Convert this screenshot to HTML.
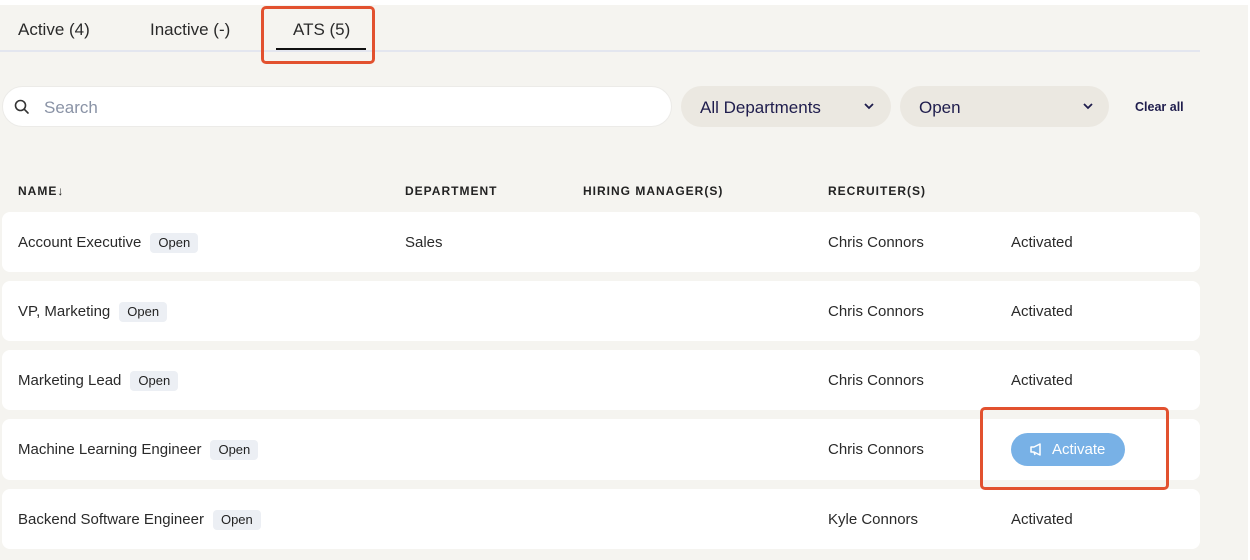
<!DOCTYPE html>
<html><head><style>
*{margin:0;padding:0;box-sizing:border-box}
body{width:1250px;height:560px;background:#fff;font-family:"Liberation Sans",sans-serif;position:relative;overflow:hidden;color:#222}
.bg{position:absolute;left:0;top:5px;width:1248px;height:555px;background:#f5f4f0}
.a{position:absolute}
.tab{font-size:17px;color:#2a2a2a;top:20px}
.row{position:absolute;left:2px;width:1198px;height:60px;background:#fff;border-radius:8px}
.row span{position:absolute;top:22px;font-size:15px;line-height:17px;color:#2a2a2a}
.row span.n{display:flex;align-items:center;top:20px;height:21px}
.badge{display:inline-block;background:#eceff4;border-radius:4px;font-size:13px;line-height:14px;padding:3px 8px;margin-left:9px;color:#222}
.hd{top:184px;font-size:12px;font-weight:bold;letter-spacing:1px;color:#222}
.sel{position:absolute;top:86px;height:41px;background:#ebe8e1;border-radius:21px;font-size:17px;color:#1f1d4d}
</style></head><body>
<div class="bg"></div>
<div class="a tab" style="left:18px">Active (4)</div>
<div class="a tab" style="left:150px">Inactive (-)</div>
<div class="a tab" style="left:293px">ATS (5)</div>
<div class="a" style="left:0;top:50px;width:1200px;height:2px;background:#e3e6ef"></div>
<div class="a" style="left:276px;top:48px;width:90px;height:2px;background:#111"></div>
<div class="a" style="left:261px;top:6px;width:114px;height:58px;border:3px solid #e2512f;border-radius:5px"></div>
<div class="a" style="left:2px;top:86px;width:670px;height:41px;background:#fff;border-radius:21px;border:1px solid #ecebe8"></div>
<svg class="a" style="left:14px;top:99px" width="16" height="16" viewBox="0 0 16 16"><circle cx="6.5" cy="6.5" r="5" fill="none" stroke="#333" stroke-width="1.6"/><path d="M10.2 10.2L14 14" stroke="#333" stroke-width="1.6" stroke-linecap="round"/></svg>
<div class="a" style="left:44px;top:98px;font-size:17px;color:#8a93a6">Search</div>
<div class="sel" style="left:681px;width:210px"><span class="a" style="left:19px;top:12px">All Departments</span><svg class="a" style="left:183px;top:16px" width="10" height="8"><path d="M1 2l4 4 4-4" fill="none" stroke="#1f1d4d" stroke-width="1.8"/></svg></div>
<div class="sel" style="left:900px;width:209px"><span class="a" style="left:19px;top:12px">Open</span><svg class="a" style="left:183px;top:16px" width="10" height="8"><path d="M1 2l4 4 4-4" fill="none" stroke="#1f1d4d" stroke-width="1.8"/></svg></div>
<div class="a" style="left:1135px;top:100px;font-size:12.5px;font-weight:bold;color:#1f1d4d">Clear all</div>
<div class="a hd" style="left:18px">NAME↓</div>
<div class="a hd" style="left:405px">DEPARTMENT</div>
<div class="a hd" style="left:583px">HIRING MANAGER(S)</div>
<div class="a hd" style="left:828px">RECRUITER(S)</div>
<div class="row" style="top:212px"><span class="n" style="left:16px">Account Executive<b class="badge" style="font-weight:normal">Open</b></span><span style="left:403px">Sales</span><span style="left:826px">Chris Connors</span><span style="left:1009px">Activated</span></div>
<div class="row" style="top:281px"><span class="n" style="left:16px">VP, Marketing<b class="badge" style="font-weight:normal">Open</b></span><span style="left:826px">Chris Connors</span><span style="left:1009px">Activated</span></div>
<div class="row" style="top:350px"><span class="n" style="left:16px">Marketing Lead<b class="badge" style="font-weight:normal">Open</b></span><span style="left:826px">Chris Connors</span><span style="left:1009px">Activated</span></div>
<div class="row" style="top:419px;height:61px"><span class="n" style="left:16px">Machine Learning Engineer<b class="badge" style="font-weight:normal">Open</b></span><span style="left:826px">Chris Connors</span></div>
<div class="row" style="top:489px"><span class="n" style="left:16px">Backend Software Engineer<b class="badge" style="font-weight:normal">Open</b></span><span style="left:826px">Kyle Connors</span><span style="left:1009px">Activated</span></div>
<div class="a" style="left:1011px;top:433px;width:114px;height:33px;background:#78b1e6;border-radius:17px"></div>
<svg class="a" style="left:1029px;top:442px" width="16" height="15" viewBox="0 0 16 15"><path d="M2 5h3l6-3v11l-6-3H2z M5 10l1 3" fill="none" stroke="#fff" stroke-width="1.5" stroke-linejoin="round"/></svg>
<div class="a" style="left:1052px;top:441px;font-size:15px;color:#fff">Activate</div>
<div class="a" style="left:980px;top:407px;width:189px;height:83px;border:3px solid #e2512f;border-radius:5px"></div>
</body></html>
